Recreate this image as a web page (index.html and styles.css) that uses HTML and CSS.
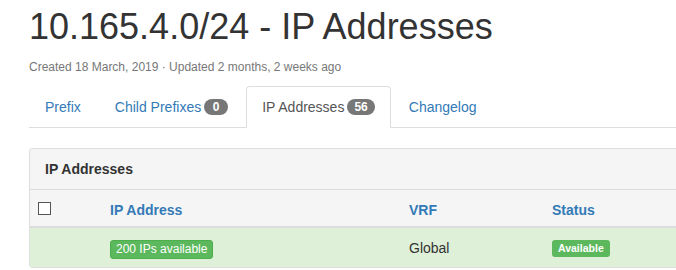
FILE: index.html
```html
<!DOCTYPE html>
<html lang="en">
<head>
  <meta charset="UTF-8" />
  <meta name="viewport" content="width=device-width, initial-scale=1.0" />
  <title>10.165.4.0/24 - IP Addresses</title>
  <link rel="stylesheet" href="styles.css">
</head>
<body>
  <div class="container">
    <h1>10.165.4.0/24 - IP Addresses</h1>
    <p class="meta">Created 18 March, 2019 &middot; Updated 2 months, 2 weeks ago</p>

    <ul class="nav-tabs">
      <li><a href="#">Prefix</a></li>
      <li><a href="#">Child Prefixes<span class="badge">0</span></a></li>
      <li class="active"><a href="#">IP Addresses<span class="badge">56</span></a></li>
      <li><a href="#">Changelog</a></li>
    </ul>

    <div class="panel">
      <div class="panel-heading">IP Addresses</div>
      <table class="table">
        <thead>
          <tr>
            <th class="col-pk"><input type="checkbox" class="toggle" /></th>
            <th class="col-address"><a href="#">IP Address</a></th>
            <th class="col-vrf"><a href="#">VRF</a></th>
            <th class="col-status"><a href="#">Status</a></th>
          </tr>
        </thead>
        <tbody>
          <tr class="success">
            <td></td>
            <td><a href="#" class="btn-available">200 IPs available</a></td>
            <td>Global</td>
            <td><span class="label">Available</span></td>
          </tr>
        </tbody>
      </table>
    </div>
  </div>
</body>
</html>
```

FILE: styles.css
```css
body {
  margin: 0;
  font-family: "Liberation Sans", Arial, sans-serif;
  font-size: 14px;
  line-height: 20px;
  color: #333;
  background: #fff;
  overflow: hidden;
}
a {
  color: #337ab7;
  text-decoration: none;
}
.container {
  width: 1000px;
  padding-left: 29px;
}
h1 {
  margin: 7px 0 10px;
  font-size: 36px;
  font-weight: 500;
  line-height: 40px;
}
.meta {
  margin: 0 0 9px;
  font-size: 12px;
  color: #777;
}
.nav-tabs {
  display: flex;
  list-style: none;
  margin: 0;
  padding: 0;
  border-bottom: 1px solid #ddd;
}
.nav-tabs li {
  margin-bottom: -1px;
  margin-right: 2px;
}
.nav-tabs a {
  display: block;
  padding: 10px 15px;
  border: 1px solid transparent;
  border-radius: 4px 4px 0 0;
}
.nav-tabs .active a {
  color: #555;
  background: #fff;
  border-color: #ddd #ddd transparent;
}
.badge {
  display: inline-block;
  min-width: 10px;
  margin-left: 3px;
  padding: 2px 7px;
  font-size: 12px;
  font-weight: bold;
  line-height: 12px;
  color: #fff;
  text-align: center;
  vertical-align: 1px;
  background: #777;
  border-radius: 10px;
}
.panel {
  margin-top: 20px;
  border: 1px solid #ddd;
  border-right: none;
  border-radius: 4px 0 0 4px;
}
.panel-heading {
  padding: 10px 15px;
  font-weight: bold;
  background: #f5f5f5;
  border-bottom: 1px solid #ddd;
  border-radius: 3px 0 0 0;
}
.table {
  width: 100%;
  border-collapse: collapse;
}
.table th,
.table td {
  padding: 10px 8px 8px;
  text-align: left;
  vertical-align: top;
}
.table th {
  padding-bottom: 6px;
  background: #f5f5f5;
  border-bottom: 2px solid #ddd;
}
.table td {
  border-top: 1px solid #ddd;
}
.col-pk { width: 56px; }
.col-address { width: 283px; }
.col-vrf { width: 127px; }
.toggle {
  appearance: none;
  display: block;
  width: 13px;
  height: 13px;
  margin: 2px 0 0;
  border: 1px solid #555;
  background: #fff;
}
.success td {
  background: #dff0d8;
}
.btn-available {
  display: inline-block;
  padding: 0 5px;
  font-size: 12px;
  line-height: 17px;
  color: #fff;
  background: #5cb85c;
  border: 1px solid #4cae4c;
  border-radius: 3px;
}
.label {
  display: inline-block;
  padding: 2px 6px 3px;
  font-size: 10.5px;
  font-weight: bold;
  line-height: 12px;
  color: #fff;
  background: #5cb85c;
  border-radius: 3px;
  vertical-align: 1px;
}
```
